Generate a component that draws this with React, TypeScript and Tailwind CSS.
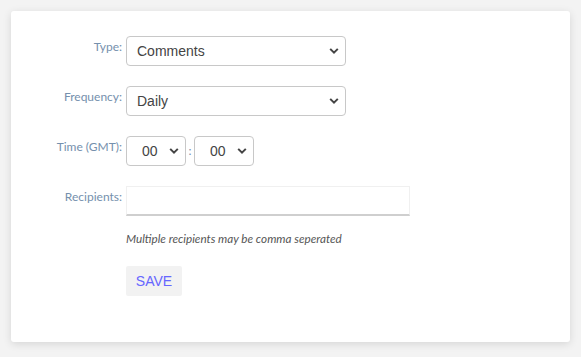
import React from "react";

const Chevron = () => (
  <svg width="10" height="7" viewBox="0 0 10 7" className="pointer-events-none absolute right-[7px] top-1/2 -translate-y-1/2">
    <path d="M1.2 1.4 L5 5.2 L8.8 1.4" fill="none" stroke="#444" strokeWidth="2" />
  </svg>
);

function Select({ value, className, pad }: { value: string; className: string; pad: string }) {
  return (
    <div className={`relative h-[30px] ${className}`}>
      <select
        defaultValue={value}
        className={`h-full w-full appearance-none rounded-[4px] border border-[#c8c8c8] bg-white ${pad} text-[14px] text-[#444] outline-none`}
        style={{ fontFamily: '"Liberation Sans", Arial, sans-serif' }}
      >
        <option>{value}</option>
      </select>
      <Chevron />
    </div>
  );
}

function Row({ label, children }: { label: string; children: React.ReactNode }) {
  return (
    <div className="flex items-start">
      <div className="w-[115px] pr-[4px] pt-[4px] text-right text-[12px] leading-[14px] text-[#7590ad]">{label}</div>
      {children}
    </div>
  );
}

export default function App() {
  return (
    <div className="min-h-[357px] w-[581px] bg-[#f3f3f3] p-[11px]" style={{ fontFamily: 'Lato, "Open Sans", sans-serif' }}>
      <div className="h-[331px] rounded-[3px] bg-white pt-[25px] shadow-[0_2px_8px_rgba(0,0,0,0.12)]">
        <div className="flex flex-col gap-[20px]">
          <Row label="Type:">
            <Select value="Comments" className="w-[220px]" pad="pl-[10px]" />
          </Row>
          <Row label="Frequency:">
            <Select value="Daily" className="w-[220px]" pad="pl-[10px]" />
          </Row>
          <Row label="Time (GMT):">
            <div className="flex items-center">
              <Select value="00" className="w-[60px]" pad="pl-[15px]" />
              <span className="w-[8px] text-center text-[12px] text-[#7590ad]">:</span>
              <Select value="00" className="w-[60px]" pad="pl-[15px]" />
            </div>
          </Row>
          <Row label="Recipients:">
            <div className="flex flex-col">
              <input
                type="text"
                className="h-[30px] w-[284px] border border-b-2 border-[#f0f0f0] border-b-[#cfcfcf] bg-white outline-none"
              />
              <div className="mt-[14px] text-[11.7px] italic leading-[16px] text-[#555]">Multiple recipients may be comma seperated</div>
              <button
                className="mt-[20px] h-[30px] w-[56px] rounded-[2px] bg-[#f2f2f2] text-[14px] text-[#6666ff]"
                style={{ fontFamily: '"Liberation Sans", Arial, sans-serif' }}
              >
                SAVE
              </button>
            </div>
          </Row>
        </div>
      </div>
    </div>
  );
}
